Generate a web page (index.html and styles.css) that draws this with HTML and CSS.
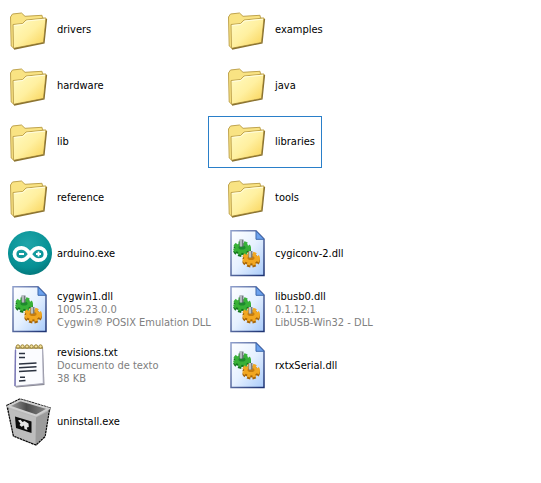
FILE: index.html
```
<!DOCTYPE html>
<html lang="pt">
<head>
    <meta charset="UTF-8">
    <title>arduino</title>
    <link rel="stylesheet" href="styles.css">
</head>
<body>
    <!-- shared icons -->
    <svg class="defs" width="0" height="0" aria-hidden="true">
        <defs>
            <linearGradient id="gFront" x1="0" y1="0" x2="1" y2="1">
                <stop offset="0" stop-color="#fffbc4"/>
                <stop offset="0.5" stop-color="#fff0a0"/>
                <stop offset="1" stop-color="#f8d050"/>
            </linearGradient>
            <linearGradient id="gPage" x1="0" y1="0" x2="1" y2="1">
                <stop offset="0" stop-color="#ffffff"/>
                <stop offset="0.5" stop-color="#e6f1ff"/>
                <stop offset="1" stop-color="#a9cbfa"/>
            </linearGradient>
            <linearGradient id="gEdge" x1="0" y1="0" x2="1" y2="1">
                <stop offset="0" stop-color="#8f9fcb"/>
                <stop offset="1" stop-color="#1c3272"/>
            </linearGradient>
            <radialGradient id="gTeal" cx="0.45" cy="0.3" r="0.75">
                <stop offset="0" stop-color="#1fa5a9"/>
                <stop offset="0.7" stop-color="#069094"/>
                <stop offset="1" stop-color="#047377"/>
            </radialGradient>
            <linearGradient id="gInside" x1="0" y1="0" x2="1" y2="0">
                <stop offset="0" stop-color="#a8a8a8"/>
                <stop offset="0.45" stop-color="#4c4c4c"/>
                <stop offset="1" stop-color="#8a8a8a"/>
            </linearGradient>
        </defs>

        <symbol id="folder" viewBox="0 0 48 48">
            <path d="M4.5 11 L6.5 8 L15.5 7 L19 10.3 L36 9.3 L36.5 12 L40 12.5 L37 36 L7.5 42 L5.2 40 Z" fill="#f9e383" stroke="#c0a44e"/>
            <path d="M7 18.5 L16.5 17.5 L20 14 L40 12 L37.5 36.5 L7.5 42.3 Z" fill="url(#gFront)" stroke="#c0a44e"/>
            <path d="M8 19.5 L17 18.5 L20.5 15 L39 13.2" fill="none" stroke="#fffde0"/>
            <path d="M40.5 13 L38 37 L8 43" fill="none" stroke="#8b7330" stroke-width="1.3"/>
        </symbol>

        <symbol id="dll" viewBox="0 0 48 48">
            <path d="M7 0.8 H32 L40 9 V45.5 H7 Z" fill="url(#gPage)" stroke="url(#gEdge)" stroke-width="1.5"/>
            <path d="M32 1 L40 9.3 H32 Z" fill="#6ca2ee" stroke="#3d69ad"/>
            <ellipse cx="18" cy="20" rx="7" ry="5" fill="#14751f" stroke="#14751f" stroke-width="4" stroke-dasharray="3 2"/>
            <ellipse cx="18" cy="18" rx="7" ry="5" fill="#38b138" stroke="#38b138" stroke-width="4" stroke-dasharray="3 2"/>
            <ellipse cx="18" cy="17.5" rx="3.5" ry="2" fill="#1d8a2c"/>
            <path d="M17.5 9.5 V16.5" stroke="#6f777c" stroke-width="4"/>
            <path d="M17 9.5 V16.5" stroke="#c4cacd" stroke-width="1.6"/>
            <ellipse cx="27" cy="30.5" rx="7" ry="5" fill="#a76507" stroke="#a76507" stroke-width="4" stroke-dasharray="3 2"/>
            <ellipse cx="27" cy="28.5" rx="7" ry="5" fill="#f1a722" stroke="#f1a722" stroke-width="4" stroke-dasharray="3 2"/>
            <ellipse cx="27" cy="28" rx="3.5" ry="2" fill="#c47c10"/>
            <path d="M26.5 21 V27.5" stroke="#7b7f80" stroke-width="4"/>
            <path d="M26 21 V27.5" stroke="#d3d5d4" stroke-width="1.6"/>
        </symbol>

        <symbol id="arduino" viewBox="0 0 48 48">
            <circle cx="24" cy="23" r="22" fill="url(#gTeal)"/>
            <path d="M24 24 C21.5 20 19 17.8 15.5 17.8 C11.5 17.8 8.5 20.5 8.5 24 C8.5 27.5 11.5 30.2 15.5 30.2 C19 30.2 21.5 28 24 24 C26.5 20 29 17.8 32.5 17.8 C36.5 17.8 39.5 20.5 39.5 24 C39.5 27.5 36.5 30.2 32.5 30.2 C29 30.2 26.5 28 24 24 Z" fill="none" stroke="#fff" stroke-width="3.8"/>
            <path d="M13 24 H18 M30 24 H35 M32.5 21.5 V26.5" stroke="#fff" stroke-width="1.8"/>
        </symbol>

        <symbol id="text" viewBox="0 0 48 48">
            <path d="M10 6 L37 5 L38.5 43 L10 45.5 L9 43 Z" fill="#8a8a96"/>
            <path d="M9.5 5 H36.5 L37.3 41.5 L9 44.3 Z" fill="#fbfcff" stroke="#a9a9ba"/>
            <path d="M9.5 8 L9 44" stroke="#7a78b8" stroke-width="1.4"/>
            <path d="M10 6 H37" stroke="#a08c48" stroke-width="1.5"/>
            <g fill="#f5e29a" stroke="#9b8337">
                <circle cx="12" cy="4.5" r="1.7"/>
                <circle cx="16.5" cy="4.5" r="1.7"/>
                <circle cx="21" cy="4.5" r="1.7"/>
                <circle cx="25.5" cy="4.5" r="1.7"/>
                <circle cx="30" cy="4.5" r="1.7"/>
                <circle cx="34.5" cy="4.5" r="1.7"/>
            </g>
            <path d="M13 11.5 H19 M13 15.5 H19 M13 22 L30.5 21 M13 25.8 L30.5 24.8 M13 29.5 L30.5 28.5 M14 35.2 H19 M13 39 L19.5 38.5" stroke="#2b3240" stroke-width="1.5"/>
        </symbol>

        <symbol id="bin" viewBox="0 0 48 48">
            <path d="M1 7.5 L14 1 L44 10 L43 14 L39 38.5 L30 47 L7.5 38 L2 12 Z" fill="#b9b9b9" stroke="#111" stroke-width="1.5" stroke-dasharray="2.5 0.5"/>
            <path d="M2.5 11 L30 19.500 L29.500 46 L8 37.5 Z" fill="#bdbdbd"/>
            <path d="M30 19.500 L42.5 13 L38.5 38 L29.5 46 Z" fill="#9c9c9c"/>
            <path d="M2.500 8.200 L14.500 2.200 L42.500 10.500 L30 17.500 Z" fill="url(#gInside)" stroke="#cfcfcf" stroke-width="2"/>
            <path d="M9 18.5 L25.5 23.5 V35 L10 30 Z" fill="#0b0b0b"/>
            <path d="M12 22.5 L14.5 21.8 L16.5 24 L18.5 23 L22.5 25.5 L22.8 29 L20.8 29.5 L21.5 32 L18.5 31 L18 27.5 L15.5 28.8 L13.5 27 L14.5 25.5 Z" fill="#e3e3e3"/>
        </symbol>
    </svg>

    <ul class="files">
        <li class="file"><svg class="icon"><use href="#folder"/></svg><div class="info"><span class="name">drivers</span></div></li>
        <li class="file"><svg class="icon"><use href="#folder"/></svg><div class="info"><span class="name">examples</span></div></li>
        <li class="file"><svg class="icon"><use href="#folder"/></svg><div class="info"><span class="name">hardware</span></div></li>
        <li class="file"><svg class="icon"><use href="#folder"/></svg><div class="info"><span class="name">java</span></div></li>
        <li class="file"><svg class="icon"><use href="#folder"/></svg><div class="info"><span class="name">lib</span></div></li>
        <li class="file selected"><svg class="icon"><use href="#folder"/></svg><div class="info"><span class="name">libraries</span></div></li>
        <li class="file"><svg class="icon"><use href="#folder"/></svg><div class="info"><span class="name">reference</span></div></li>
        <li class="file"><svg class="icon"><use href="#folder"/></svg><div class="info"><span class="name">tools</span></div></li>
        <li class="file"><svg class="icon"><use href="#arduino"/></svg><div class="info"><span class="name">arduino.exe</span></div></li>
        <li class="file"><svg class="icon"><use href="#dll"/></svg><div class="info"><span class="name">cygiconv-2.dll</span></div></li>
        <li class="file">
            <svg class="icon"><use href="#dll"/></svg>
            <div class="info">
                <span class="name">cygwin1.dll</span>
                <span>1005.23.0.0</span>
                <span>Cygwin® POSIX Emulation DLL</span>
            </div>
        </li>
        <li class="file">
            <svg class="icon"><use href="#dll"/></svg>
            <div class="info">
                <span class="name">libusb0.dll</span>
                <span>0.1.12.1</span>
                <span>LibUSB-Win32 - DLL</span>
            </div>
        </li>
        <li class="file">
            <svg class="icon"><use href="#text"/></svg>
            <div class="info">
                <span class="name">revisions.txt</span>
                <span>Documento de texto</span>
                <span>38 KB</span>
            </div>
        </li>
        <li class="file"><svg class="icon"><use href="#dll"/></svg><div class="info"><span class="name">rxtxSerial.dll</span></div></li>
        <li class="file"><svg class="icon"><use href="#bin"/></svg><div class="info"><span class="name">uninstall.exe</span></div></li>
    </ul>
</body>
</html>
```
FILE: styles.css
```
body {
    margin: 0;
    background: #fff;
    font-family: Tahoma, "DejaVu Sans Condensed", sans-serif;
    font-size: 11px;
    line-height: 13px;
    color: #000;
}
.defs {
    position: absolute;
}
.files {
    display: grid;
    grid-template-columns: repeat(auto-fill, 218px);
    gap: 4px 0;
    margin: 0;
    padding: 4px 6px;
    list-style: none;
}
.file {
    position: relative;
    display: flex;
    align-items: center;
    justify-self: start;
    gap: 3px;
    height: 52px;
    white-space: nowrap;
}
.icon {
    width: 48px;
    height: 48px;
    flex: none;
}
.info {
    display: flex;
    flex-direction: column;
    padding-bottom: 2px;
    color: #808080;
}
.name {
    color: #000;
}
/* focus frame around the selected item */
.selected::before {
    content: "";
    position: absolute;
    inset: 0 -7px 0 -16px;
    border: 1px solid #2a7fc9;
}
```
